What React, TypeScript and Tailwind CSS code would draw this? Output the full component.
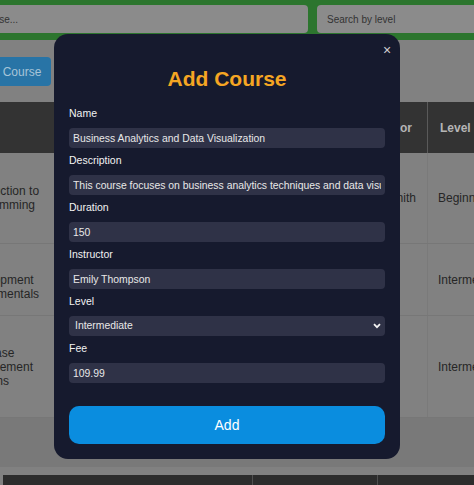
import React from "react"

const rows = [
  { h: "h-[91px]", course: ["Introduction to", "Programming"], instructor: "John Smith", level: "Beginner" },
  { h: "h-[72px]", course: ["Web", "Development", "Fundamentals"], instructor: "Li Wei", level: "Intermediate" },
  { h: "h-[102px]", course: ["Database", "Management", "Systems"], instructor: "Jo Kim", level: "Intermediate" },
]

const fields = [
  { label: "Name", value: "Business Analytics and Data Visualization" },
  {
    label: "Description",
    value: "This course focuses on business analytics techniques and data visualization tools for decision making.",
  },
  { label: "Duration", value: "150" },
  { label: "Instructor", value: "Emily Thompson" },
]

function Field({ label, value }: { label: string; value: string }) {
  return (
    <div className="flex flex-col">
      <label className="block text-[10.5px] leading-[15px] mb-[7px] text-[#f2f2f2]">{label}</label>
      <input
        defaultValue={value}
        className="block h-[20px] w-full rounded-[4px] bg-[#2f3247] px-[4px] text-[10.4px] text-[#e8e8e8] outline-none"
      />
    </div>
  )
}

export default function App() {
  return (
    <div className="relative h-screen w-full overflow-hidden bg-[#818181] font-['Liberation_Sans',Arial,sans-serif]">
      {/* search bar */}
      <div className="flex h-[40px] bg-[#2c752e] pt-[5px]">
        <input
          placeholder="Search by course..."
          className="-ml-[78px] h-[28px] w-[386px] shrink-0 rounded-[4px] bg-[#8b8b8b] px-[10px] text-[10px] text-[#333] placeholder:text-[#333] outline-none"
        />
        <input
          placeholder="Search by level"
          className="ml-[9px] h-[28px] w-[200px] shrink-0 rounded-[4px] bg-[#8b8b8b] px-[10px] text-[10px] text-[#333] placeholder:text-[#333] outline-none"
        />
      </div>

      <button className="mt-[17px] -ml-[32px] flex h-[29px] items-center rounded-[4px] bg-[#2874a6] px-[10px] text-[12px] text-[#a6c4d8]">
        Add Course
      </button>

      {/* courses table */}
      <div className="mt-[16px] -ml-[49px] w-[587px]">
        <div className="grid h-[51px] grid-cols-[111px_282px_84px_110px] bg-[#333333] text-[12px] font-bold text-[#b5b5b5]">
          <div className="flex items-center border-r border-[#5a5a5a] px-[12px]">Title</div>
          <div className="flex items-center border-r border-[#5a5a5a] px-[12px]">Description</div>
          <div className="flex items-center border-r border-[#5a5a5a] px-[12px]">Instructor</div>
          <div className="flex items-center px-[12px]">Level</div>
        </div>
        {rows.map((r) => (
          <div
            key={r.instructor}
            className={`grid ${r.h} grid-cols-[111px_282px_84px_110px] border-b border-[#777777] text-[12px] leading-[14px] text-[#262626]`}
          >
            <div className="flex items-center whitespace-nowrap border-r border-[#7a7a7a] px-[12px]">
              <div>
                {r.course.map((l) => (
                  <div key={l}>{l}</div>
                ))}
              </div>
            </div>
            <div className="border-r border-[#7a7a7a]" />
            <div className="flex items-center whitespace-nowrap border-r border-[#7a7a7a] px-[12px]">{r.instructor}</div>
            <div className="flex items-center whitespace-nowrap px-[10px]">{r.level}</div>
          </div>
        ))}
      </div>

      <div className="h-[49px] bg-[#797979]" />

      <div className="ml-[3px] mt-[8px] grid h-[40px] grid-cols-[250px_125px_1fr] bg-[#2c2c2c]">
        <div className="border-r border-[#4f4f4f]" />
        <div className="border-r border-[#4f4f4f]" />
        <div />
      </div>

      {/* modal */}
      <div className="fixed inset-0 pl-[54px] pt-[34px]">
        <div className="relative w-[346px] rounded-[14px] bg-[#161a2e] px-[15px] pt-[15px] pb-[15px]">
          <button className="absolute right-[8px] top-[8px] w-[10px] text-center text-[14px] leading-[16px] text-[#d0d0d0]">
            ×
          </button>
          <h2 className="mt-[18px] mb-[15px] text-center text-[21px] font-bold leading-[24px] text-[#f5a623]">
            Add Course
          </h2>
          <div className="flex flex-col gap-[5px]">
            {fields.map((f) => (
              <Field key={f.label} label={f.label} value={f.value} />
            ))}
            <div className="flex flex-col">
              <label className="block text-[10.5px] leading-[15px] mb-[7px] text-[#f2f2f2]">Level</label>
              <div className="relative h-[20px]">
                <select
                  defaultValue="Intermediate"
                  className="block h-[20px] w-full appearance-none rounded-[4px] bg-[#2f3247] pl-[6px] text-[10.4px] leading-[20px] text-[#e8e8e8] outline-none"
                >
                  <option>Beginner</option>
                  <option>Intermediate</option>
                  <option>Advanced</option>
                </select>
                <svg
                  className="pointer-events-none absolute right-[4px] top-[7px]"
                  width="8"
                  height="6"
                  viewBox="0 0 8 6"
                >
                  <path d="M1 1.2 4 4.2 7 1.2" fill="none" stroke="#f2f2f2" strokeWidth="1.8" />
                </svg>
              </div>
            </div>
            <Field label="Fee" value="109.99" />
          </div>
          <button className="mt-[23px] block h-[38px] w-full rounded-[10px] bg-[#0a8ddf] text-[14px] text-white">Add</button>
        </div>
      </div>
    </div>
  )
}
